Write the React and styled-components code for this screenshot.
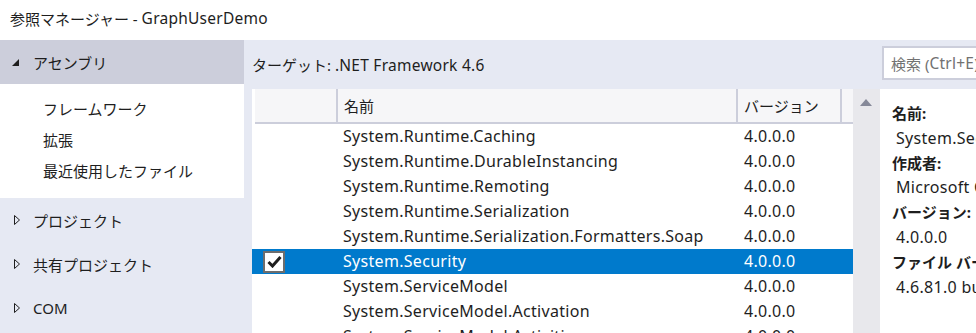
import React from 'react';
import styled, { createGlobalStyle } from 'styled-components';

const GlobalStyle = createGlobalStyle`
  html, body { margin: 0; padding: 0; background: #E6E9F3; }
  * { box-sizing: border-box; }
`;

const FONT = `"Noto Sans", "Noto Sans CJK JP", sans-serif`;

const assemblies = [
  { name: 'System.Runtime.Caching', version: '4.0.0.0' },
  { name: 'System.Runtime.DurableInstancing', version: '4.0.0.0' },
  { name: 'System.Runtime.Remoting', version: '4.0.0.0' },
  { name: 'System.Runtime.Serialization', version: '4.0.0.0' },
  { name: 'System.Runtime.Serialization.Formatters.Soap', version: '4.0.0.0' },
  { name: 'System.Security', version: '4.0.0.0', checked: true, selected: true },
  { name: 'System.ServiceModel', version: '4.0.0.0' },
  { name: 'System.ServiceModel.Activation', version: '4.0.0.0' },
  { name: 'System.ServiceModel.Activities', version: '4.0.0.0' },
];

const details = [
  { label: '名前:', value: 'System.Security' },
  { label: '作成者:', value: 'Microsoft Corporation' },
  { label: 'バージョン:', value: '4.0.0.0' },
  { label: 'ファイル バージョン:', value: '4.6.81.0 built by: NETFXREL2' },
];

export default function App() {
  return (
    <Window>
      <GlobalStyle />
      <TitleBar>参照マネージャー - <Latin>GraphUserDemo</Latin></TitleBar>
      <Body>
        <Sidebar>
          <GroupHeader>
            <svg width="7" height="7" viewBox="0 0 7 7"><path d="M7 0 L7 7 L0 7 Z" fill="#1E1E1E" /></svg>
            アセンブリ
          </GroupHeader>
          <SubList>
            <SubItem>フレームワーク</SubItem>
            <SubItem>拡張</SubItem>
            <SubItem>最近使用したファイル</SubItem>
          </SubList>
          {['プロジェクト', '共有プロジェクト', 'COM'].map(g => (
            <GroupRow key={g}>
              <svg width="6" height="10" viewBox="0 0 6 10"><path d="M0.5 0.5 L5.5 5 L0.5 9.5 Z" fill="none" stroke="#1E1E1E" strokeWidth="1" /></svg>
              {g}
            </GroupRow>
          ))}
        </Sidebar>
        <Main>
          <Toolbar>
            <TargetLabel>ターゲット: <Latin>.NET Framework 4.6</Latin></TargetLabel>
            <SearchBox>検索 (<Latin>Ctrl+E</Latin>)</SearchBox>
          </Toolbar>
          <Content>
            <Table>
              <HeaderRow>
                <HeaderCell />
                <HeaderCell>名前</HeaderCell>
                <HeaderCell>バージョン</HeaderCell>
                <HeaderCell $last />
              </HeaderRow>
              {assemblies.map(a => (
                <Row key={a.name} $selected={a.selected}>
                  <CheckCell>
                    {a.checked && (
                      <CheckBox>
                        <svg width="15" height="13" viewBox="0 0 15 13">
                          <path d="M1.5 7 L5.5 11 L13.5 2" fill="none" stroke="#1E1E1E" strokeWidth="3" />
                        </svg>
                      </CheckBox>
                    )}
                  </CheckCell>
                  <NameCell>{a.name}</NameCell>
                  <VersionCell>{a.version}</VersionCell>
                </Row>
              ))}
            </Table>
            <ScrollBar>
              <svg width="12" height="7" viewBox="0 0 12 7"><path d="M6 0 L12 7 L0 7 Z" fill="#868999" /></svg>
            </ScrollBar>
            <Details>
              {details.map(d => (
                <React.Fragment key={d.label}>
                  <DetailLabel>{d.label}</DetailLabel>
                  <DetailValue>{d.value}</DetailValue>
                </React.Fragment>
              ))}
            </Details>
          </Content>
        </Main>
      </Body>
    </Window>
  );
}

const Window = styled.div`
  width: 976px;
  height: 333px;
  overflow: hidden;
  display: flex;
  flex-direction: column;
  font-family: ${FONT};
  font-size: 15px;
  color: #1E1E1E;
  background: #E6E9F3;
`;

const Latin = styled.span`
  font-size: 15.5px;
  letter-spacing: 0.25px;
`;

const TitleBar = styled.div`
  height: 40px;
  flex-shrink: 0;
  background: #FFFFFF;
  padding-left: 10px;
  display: flex;
  align-items: center;
  padding-bottom: 4px;
  white-space: pre;
`;

const Body = styled.div`
  flex: 1;
  display: flex;
  min-height: 0;
`;

const Sidebar = styled.div`
  width: 244px;
  flex-shrink: 0;
  display: flex;
  flex-direction: column;
`;

const GroupHeader = styled.div`
  height: 44px;
  background: #CCCEDB;
  display: flex;
  align-items: center;
  gap: 14px;
  padding-left: 12px;
`;

const SubList = styled.div`
  background: #FFFFFF;
  height: 114px;
  padding: 10px 0 0 43px;
`;

const SubItem = styled.div`
  line-height: 31px;
  white-space: nowrap;
`;

const GroupRow = styled.div`
  height: 44px;
  display: flex;
  align-items: center;
  gap: 13px;
  padding-left: 14px;
  &:first-of-type { margin-top: 1px; }
`;

const Main = styled.div`
  flex: 1;
  display: flex;
  flex-direction: column;
  min-width: 0;
  overflow: hidden;
`;

const Toolbar = styled.div`
  height: 49px;
  flex-shrink: 0;
  display: flex;
  padding-left: 8px;
`;

const TargetLabel = styled.div`
  width: 630px;
  flex-shrink: 0;
  display: flex;
  align-items: center;
  white-space: pre;
`;

const SearchBox = styled.div`
  margin-top: 6px;
  height: 34px;
  width: 200px;
  flex-shrink: 0;
  background: #FFFFFF;
  border: 2px solid #CCCEDB;
  color: #717171;
  padding-left: 7px;
  display: flex;
  align-items: center;
  white-space: pre;
`;

const Content = styled.div`
  flex: 1;
  display: flex;
  padding-left: 8px;
  min-height: 0;
`;

const Table = styled.div`
  width: 601px;
  flex-shrink: 0;
  background: #FFFFFF;
`;

const HeaderRow = styled.div`
  display: grid;
  grid-template-columns: 83px 400px 104px 1fr;
  height: 35px;
  margin-left: 3px;
  background: #F6F6F8;
  border-bottom: 2px solid #CCCEDB;
`;

const HeaderCell = styled.div`
  border-right: ${p => (p.$last ? 'none' : '2px solid #CCCEDB')};
  display: flex;
  align-items: center;
  padding-left: 6px;
  white-space: nowrap;
`;

const Row = styled.div`
  display: grid;
  grid-template-columns: 86px 400px 1fr;
  height: 25px;
  background: ${p => (p.$selected ? '#007ACC' : 'transparent')};
  color: ${p => (p.$selected ? '#FFFFFF' : '#1E1E1E')};
`;

const CheckCell = styled.div`
  display: flex;
  align-items: center;
  padding-left: 11px;
`;

const CheckBox = styled.div`
  width: 22px;
  height: 22px;
  background: #FFFFFF;
  border: 2px solid #6D6D6D;
  display: flex;
  align-items: center;
  justify-content: center;
`;

const NameCell = styled.div`
  padding-left: 5px;
  line-height: 25px;
  font-size: 16px;
  letter-spacing: 0.3px;
  white-space: nowrap;
`;

const VersionCell = styled.div`
  padding-left: 6px;
  line-height: 25px;
  font-size: 16px;
  letter-spacing: 0.3px;
  white-space: nowrap;
`;

const ScrollBar = styled.div`
  width: 27px;
  flex-shrink: 0;
  background: #E8E8EC;
  display: flex;
  justify-content: center;
  padding-top: 10px;
  padding-right: 2px;
`;

const Details = styled.div`
  flex: 1;
  background: #FFFFFF;
  padding: 12px 0 0 12px;
  overflow: hidden;
  white-space: nowrap;
`;

const DetailLabel = styled.div`
  font-weight: bold;
  line-height: 24.8px;
`;

const DetailValue = styled.div`
  padding-left: 4px;
  line-height: 24.8px;
  font-size: 16px;
  letter-spacing: 0.3px;
`;
